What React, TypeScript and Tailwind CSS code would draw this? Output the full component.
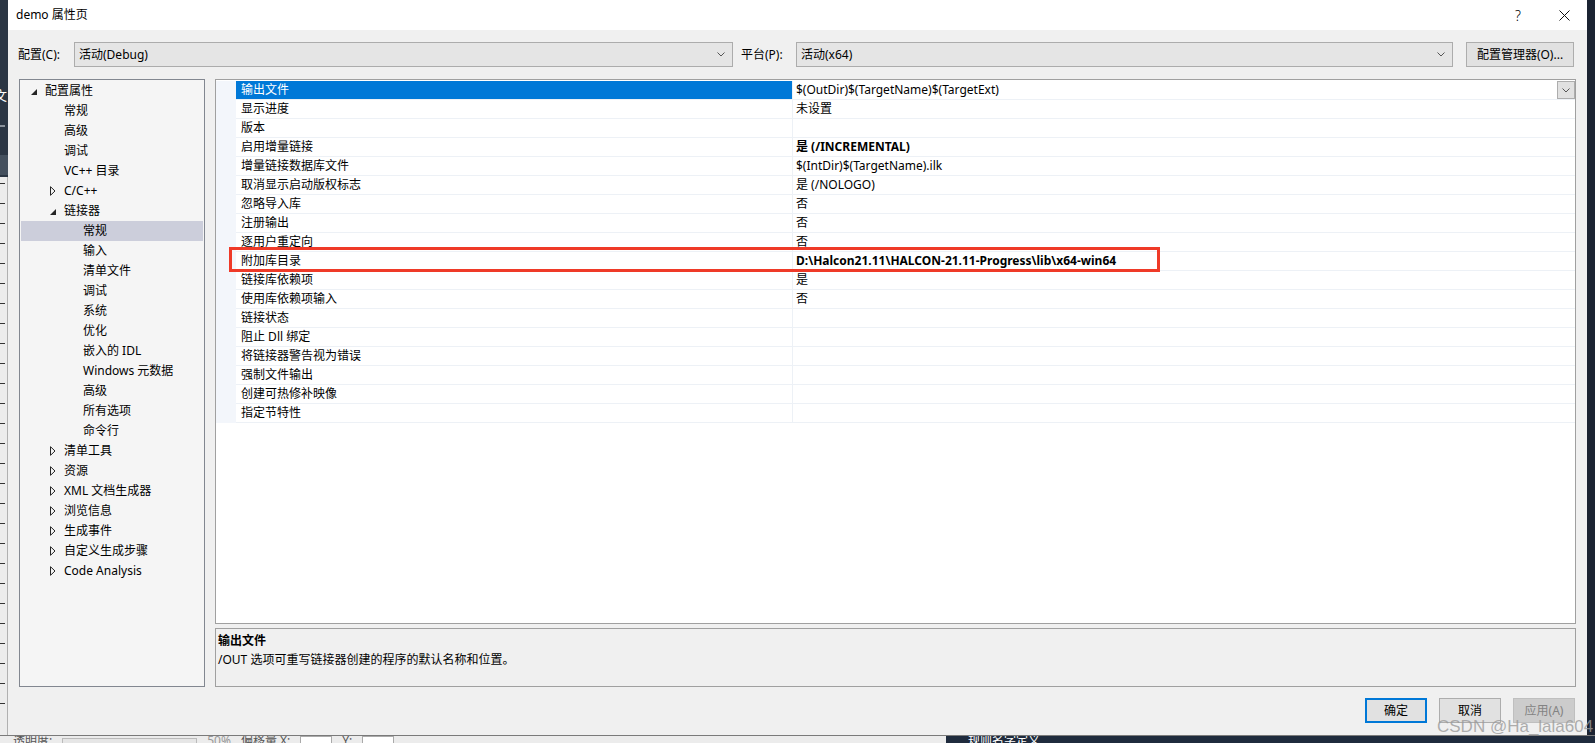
import type { ReactNode } from "react";

type TreeItem = { label: string; level: number; state?: "open" | "closed"; selected?: boolean };

const treeItems: TreeItem[] = [
  { label: "配置属性", level: 0, state: "open" },
  { label: "常规", level: 1 },
  { label: "高级", level: 1 },
  { label: "调试", level: 1 },
  { label: "VC++ 目录", level: 1 },
  { label: "C/C++", level: 1, state: "closed" },
  { label: "链接器", level: 1, state: "open" },
  { label: "常规", level: 2, selected: true },
  { label: "输入", level: 2 },
  { label: "清单文件", level: 2 },
  { label: "调试", level: 2 },
  { label: "系统", level: 2 },
  { label: "优化", level: 2 },
  { label: "嵌入的 IDL", level: 2 },
  { label: "Windows 元数据", level: 2 },
  { label: "高级", level: 2 },
  { label: "所有选项", level: 2 },
  { label: "命令行", level: 2 },
  { label: "清单工具", level: 1, state: "closed" },
  { label: "资源", level: 1, state: "closed" },
  { label: "XML 文档生成器", level: 1, state: "closed" },
  { label: "浏览信息", level: 1, state: "closed" },
  { label: "生成事件", level: 1, state: "closed" },
  { label: "自定义生成步骤", level: 1, state: "closed" },
  { label: "Code Analysis", level: 1, state: "closed" }
];

type Prop = { name: string; value?: string; bold?: boolean };

const props: Prop[] = [
  { name: "输出文件", value: "$(OutDir)$(TargetName)$(TargetExt)" },
  { name: "显示进度", value: "未设置" },
  { name: "版本" },
  { name: "启用增量链接", value: "是 (/INCREMENTAL)", bold: true },
  { name: "增量链接数据库文件", value: "$(IntDir)$(TargetName).ilk" },
  { name: "取消显示启动版权标志", value: "是 (/NOLOGO)" },
  { name: "忽略导入库", value: "否" },
  { name: "注册输出", value: "否" },
  { name: "逐用户重定向", value: "否" },
  { name: "附加库目录", value: "D:\\Halcon21.11\\HALCON-21.11-Progress\\lib\\x64-win64", bold: true },
  { name: "链接库依赖项", value: "是" },
  { name: "使用库依赖项输入", value: "否" },
  { name: "链接状态" },
  { name: "阻止 Dll 绑定" },
  { name: "将链接器警告视为错误" },
  { name: "强制文件输出" },
  { name: "创建可热修补映像" },
  { name: "指定节特性" }
];

const Chevron = () => (
  <svg width="8" height="5" viewBox="0 0 8 5" className="shrink-0">
    <path d="M0.5 0.5 L4 4 L7.5 0.5" fill="none" stroke="#555" strokeWidth="1" />
  </svg>
);

function Combo({ width, children }: { width: string; children: ReactNode }) {
  return (
    <div className={`flex h-[25px] items-center justify-between border border-[#acacac] bg-[#e5e5e5] pl-[4px] pr-[7px] ${width}`}>
      <span>{children}</span>
      <Chevron />
    </div>
  );
}

function Expander({ state }: { state?: "open" | "closed" }) {
  if (state === "open") {
    return (
      <svg width="6" height="6" viewBox="0 0 6 6" className="mt-[2px]">
        <polygon points="6,0 6,6 0,6" fill="#262626" />
      </svg>
    );
  }
  if (state === "closed") {
    return (
      <svg width="6" height="10" viewBox="0 0 6 10">
        <polygon points="0.5,0.7 5,5 0.5,9.3" fill="none" stroke="#262626" strokeWidth="1" />
      </svg>
    );
  }
  return null;
}

function Tree() {
  return (
    <div className="h-full w-[186px] border border-[#828790] bg-[#f5f5f5] pt-[1px]">
      {treeItems.map((item, i) => (
        <div
          key={i}
          className={`mx-[1px] flex h-[20px] items-center ${item.selected ? "bg-[#cccedb]" : ""}`}
        >
          <div
            className="flex w-[12px] shrink-0 items-center justify-start"
            style={{ marginLeft: 10 + item.level * 19 }}
          >
            <Expander state={item.state} />
          </div>
          <span className="ml-[2px] whitespace-nowrap">{item.label}</span>
        </div>
      ))}
    </div>
  );
}

function Grid() {
  return (
    <div className="h-[545px] border border-[#a0a0a0] bg-white pt-[1px]">
      {props.map((p, i) => (
        <div key={i} className="flex h-[19px]">
          <div className="w-[20px] shrink-0 bg-[#f3f6fb]" />
          <div
            className={`flex w-[557px] shrink-0 items-center border-r border-b border-[#edf1f6] pl-[5px] ${
              i === 0 ? "bg-[#0078d7] text-white" : ""
            }`}
          >
            {p.name}
          </div>
          <div className="flex flex-1 items-center justify-between border-b border-[#edf1f6] pl-[3px]">
            <span className={`whitespace-nowrap ${p.bold ? "font-bold" : ""}`}>{p.value ?? ""}</span>
            {i === 0 && (
              <div className="flex h-[18px] w-[18px] items-center justify-center border border-[#adadad] bg-[#e1e1e1]">
                <Chevron />
              </div>
            )}
          </div>
        </div>
      ))}
    </div>
  );
}

function Button({ children, kind }: { children: ReactNode; kind?: "default" | "disabled" }) {
  const look =
    kind === "default"
      ? "border-2 border-[#0078d7] bg-[#e1e1e1] text-black"
      : kind === "disabled"
        ? "border border-[#bfbfbf] bg-[#cccccc] text-[#838383]"
        : "border border-[#adadad] bg-[#e1e1e1] text-black";
  return (
    <div className={`flex h-[25px] w-[62px] items-center justify-center ${look}`}>{children}</div>
  );
}

function LeftStrip() {
  return (
    <div className="flex w-[8px] shrink-0 flex-col">
      <div className="relative h-[177px] overflow-hidden bg-[#2b3644]">
        <span className="absolute left-[-6px] top-[86px] text-[13px] text-white">文</span>
        <div className="absolute left-0 top-[125px] h-[2px] w-[5px] bg-[#8a929c]" />
        <div className="absolute left-0 top-[155px] h-[20px] w-[8px] bg-[#44505e]" />
      </div>
      <div className="flex flex-1 flex-col gap-[19px] border-r border-[#b0b0b0] bg-[#ececec] pt-[6px]">
        {Array.from({ length: 27 }).map((_, i) => (
          <div key={i} className="h-[1px] w-[5px] bg-[#333]" />
        ))}
      </div>
    </div>
  );
}

function BottomStrip() {
  return (
    <div className="flex h-[8px] overflow-hidden border-t border-[#7a7a7a] text-[12px] leading-[14px]">
      <div className="flex w-[946px] items-start gap-[10px] bg-[#ececec] pl-[13px] text-[#555]">
        <span className="mt-[-2px]">透明度:</span>
        <div className="mt-[2px] h-[6px] w-[135px] border border-[#bbb] bg-[#e6e6e6]" />
        <span className="mt-[-2px] text-[#999]">50%</span>
        <span className="mt-[-2px]">偏移量 X:</span>
        <div className="h-[8px] w-[32px] border border-[#aaa] bg-white" />
        <span className="mt-[-2px]">Y:</span>
        <div className="h-[8px] w-[32px] border border-[#aaa] bg-white" />
      </div>
      <div className="flex-1 bg-[#1f2b3d] pl-[22px] text-white">
        <span className="mt-[-2px] block">规则名字定义</span>
      </div>
    </div>
  );
}

export default function App() {
  return (
    <div className="relative h-[743px] w-[1595px] overflow-hidden bg-[#1d2838] font-['Noto_Sans','Noto_Sans_CJK_SC',sans-serif] text-[12px] text-black">
      <div className="flex h-[735px]">
        <LeftStrip />
        <div className="flex w-[1579px] shrink-0 flex-col bg-[#f0f0f0]">
          <div className="flex h-[30px] items-center justify-between bg-white pl-[8px]">
            <span className="text-[12px]">demo 属性页</span>
            <div className="flex h-full">
              <div className="flex w-[46px] items-center justify-center text-[14px] font-light">?</div>
              <div className="flex w-[46px] items-center justify-center">
                <svg width="11" height="11" viewBox="0 0 11 11">
                  <path d="M0.5 0.5 L10.5 10.5 M10.5 0.5 L0.5 10.5" stroke="#111" strokeWidth="1" />
                </svg>
              </div>
            </div>
          </div>

          <div className="mt-[12px] flex h-[25px] items-center pl-[10px]">
            <span className="w-[56px]">配置(C):</span>
            <Combo width="w-[659px]">活动(Debug)</Combo>
            <span className="ml-[8px] w-[55px]">平台(P):</span>
            <Combo width="w-[657px]">活动(x64)</Combo>
            <div className="ml-[13px] flex h-[25px] w-[108px] items-center justify-center border border-[#adadad] bg-[#e1e1e1]">
              配置管理器(O)...
            </div>
          </div>

          <div className="mt-[12px] flex h-[608px] gap-[10px] px-[11px]">
            <Tree />
            <div className="flex flex-1 flex-col gap-[4px]">
              <Grid />
              <div className="flex-1 border border-[#a0a0a0] bg-[#f0f0f0] pl-[2px] pt-[2px] leading-[19px]">
                <div className="font-bold">输出文件</div>
                <div>/OUT 选项可重写链接器创建的程序的默认名称和位置。</div>
              </div>
            </div>
          </div>

          <div className="mt-[11px] flex justify-end gap-[12px] pr-[12px]">
            <Button kind="default">确定</Button>
            <Button>取消</Button>
            <Button kind="disabled">应用(A)</Button>
          </div>
        </div>
        <div className="flex-1 bg-[#1b2332]" />
      </div>
      <BottomStrip />

      <div className="pointer-events-none absolute left-[229px] top-[247px] h-[25px] w-[931px] border-[3px] border-[#ef3a28]" />

      <div className="pointer-events-none absolute left-[1437px] top-[717px] font-['Liberation_Sans',sans-serif] text-[17px] leading-[20px] text-[#9a9a9a]/80">
        CSDN @Ha_lala604
      </div>
    </div>
  );
}
